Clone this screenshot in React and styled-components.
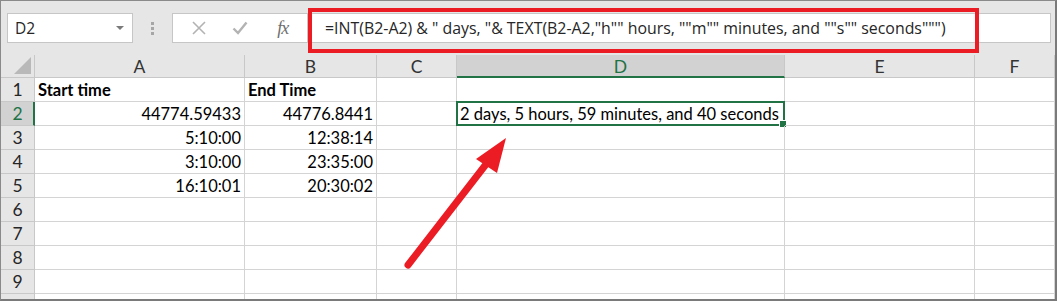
import React from "react";
import styled, { createGlobalStyle } from "styled-components";

const GlobalStyle = createGlobalStyle`
  html, body {
    margin: 0;
    padding: 0;
    background: #ffffff;
  }
  * {
    box-sizing: border-box;
  }
`;

const COLUMNS = [
  { key: "A", width: 210 },
  { key: "B", width: 132 },
  { key: "C", width: 80 },
  { key: "D", width: 328 },
  { key: "E", width: 190 },
  { key: "F", width: 80 },
];

const ROWS = [
  { A: { text: "Start time", bold: true }, B: { text: "End Time", bold: true } },
  {
    A: { text: "44774.59433", right: true },
    B: { text: "44776.8441", right: true },
    D: { text: "2 days, 5 hours, 59 minutes, and 40 seconds" },
  },
  { A: { text: "5:10:00", right: true }, B: { text: "12:38:14", right: true } },
  { A: { text: "3:10:00", right: true }, B: { text: "23:35:00", right: true } },
  { A: { text: "16:10:01", right: true }, B: { text: "20:30:02", right: true } },
  {},
  {},
  {},
  {},
];

const SELECTED = { col: "D", row: 2 };
const FORMULA =
  '=INT(B2-A2) & " days, "& TEXT(B2-A2,"h"" hours, ""m"" minutes, and ""s"" seconds""")';

const Frame = styled.div`
  position: relative;
  width: 1057px;
  height: 301px;
  overflow: hidden;
  border-top: 1px solid #8a8a8a;
  border-left: 1px solid #8a8a8a;
  border-right: 2px solid #7a7a7a;
  border-bottom: 2px solid #7a7a7a;
  background: #e6e6e6;
  display: flex;
  flex-direction: column;
`;

const Toolbar = styled.div`
  position: relative;
  height: 54px;
  flex-shrink: 0;
  display: flex;
  align-items: flex-start;
  padding: 12px 4px 0 6px;
`;

const NameBox = styled.div`
  width: 126px;
  height: 30px;
  background: #ffffff;
  border: 1px solid #c6c6c6;
  display: flex;
  align-items: center;
  justify-content: space-between;
  padding: 0 8px 0 7px;
  font-family: "Open Sans", "Noto Sans", sans-serif;
  font-size: 15.5px;
  color: #262626;
`;

const Caret = styled.span`
  width: 0;
  height: 0;
  border-left: 4px solid transparent;
  border-right: 4px solid transparent;
  border-top: 4px solid #7a7a7a;
`;

const Grip = styled.div`
  width: 39px;
  height: 30px;
  display: flex;
  flex-direction: column;
  align-items: center;
  justify-content: center;
  gap: 2px;
`;

const GripDot = styled.span`
  width: 3px;
  height: 3px;
  background: #a6a6a6;
`;

const ButtonBox = styled.div`
  width: 136px;
  height: 30px;
  background: #ffffff;
  border: 1px solid #c6c6c6;
  display: flex;
  align-items: center;
  justify-content: space-around;
  padding: 0 6px;
`;

const IconButton = styled.span`
  width: 34px;
  display: flex;
  align-items: center;
  justify-content: center;
  color: ${(p) => p.$color || "#b3b3b3"};
`;

const Fx = styled.span`
  font-family: "Liberation Serif", "DejaVu Serif", serif;
  font-style: italic;
  font-size: 18px;
  color: #6e6e6e;
  letter-spacing: -1px;
  margin-left: 4px;
`;

const FormulaInput = styled.div`
  flex: 1;
  height: 30px;
  margin-left: 1px;
  background: #ffffff;
  border: 1px solid #c6c6c6;
  border-left: none;
  display: flex;
  align-items: center;
  padding-left: 16px;
  font-family: "Open Sans", "Noto Sans", sans-serif;
  font-size: 15.9px;
  color: #262626;
  white-space: nowrap;
`;

const Highlight = styled.div`
  position: absolute;
  left: 307px;
  top: 7px;
  width: 671px;
  height: 45px;
  border: 4px solid #ec1c24;
  pointer-events: none;
`;

const Sheet = styled.div`
  display: grid;
  grid-template-columns: 34px ${COLUMNS.map((c) => `${c.width}px`).join(" ")};
  grid-auto-rows: 24px;
  grid-template-rows: 23px;
  background: #ffffff;
  font-family: Lato, "Liberation Sans", sans-serif;
`;

const Corner = styled.div`
  position: relative;
  background: #e6e6e6;
  border-right: 1px solid #c8c8c8;
  border-bottom: 1px solid #c8c8c8;

  &::after {
    content: "";
    position: absolute;
    right: 3px;
    bottom: 3px;
    width: 0;
    height: 0;
    border-left: 17px solid transparent;
    border-bottom: 17px solid #b9b9b9;
  }
`;

const ColHeader = styled.div`
  background: ${(p) => (p.$active ? "#d2d2d2" : "#e6e6e6")};
  color: ${(p) => (p.$active ? "#217346" : "#333333")};
  border-right: 1px solid #c8c8c8;
  border-bottom: ${(p) => (p.$active ? "2px solid #217346" : "1px solid #c8c8c8")};
  display: flex;
  align-items: center;
  justify-content: center;
  font-size: 17.5px;
  padding-top: ${(p) => (p.$active ? "1px" : "0")};
`;

const RowHeader = styled.div`
  background: ${(p) => (p.$active ? "#d2d2d2" : "#e6e6e6")};
  color: ${(p) => (p.$active ? "#217346" : "#262626")};
  border-right: ${(p) => (p.$active ? "2px solid #217346" : "1px solid #c8c8c8")};
  border-bottom: 1px solid #c8c8c8;
  display: flex;
  align-items: center;
  justify-content: center;
  font-size: 17.5px;
  padding-left: ${(p) => (p.$active ? "1px" : "0")};
`;

const Cell = styled.div`
  position: relative;
  border-right: 1px solid #d4d4d4;
  border-bottom: 1px solid #d4d4d4;
  display: flex;
  align-items: center;
  justify-content: ${(p) => (p.$right ? "flex-end" : "flex-start")};
  padding: 1px 3px 0 3px;
  font-size: 16.5px;
  font-weight: ${(p) => (p.$bold ? 700 : 400)};
  color: #000000;
  white-space: nowrap;
`;

const Selection = styled.div`
  position: absolute;
  left: -1px;
  top: -1px;
  right: -1px;
  bottom: -1px;
  border: 2px solid #217346;
  pointer-events: none;

  &::after {
    content: "";
    position: absolute;
    right: -4px;
    bottom: -4px;
    width: 6px;
    height: 6px;
    background: #217346;
    border: 1px solid #ffffff;
  }
`;

const Annotation = styled.svg`
  position: absolute;
  left: -1px;
  top: -1px;
  pointer-events: none;
`;

const CrossIcon = () => (
  <svg width="14" height="14" viewBox="0 0 14 14">
    <path d="M1 1 L13 13 M13 1 L1 13" stroke="currentColor" strokeWidth="1.6" fill="none" />
  </svg>
);

const CheckIcon = () => (
  <svg width="16" height="14" viewBox="0 0 16 14">
    <path d="M1.5 7.5 L6 12 L14.5 1.5" stroke="currentColor" strokeWidth="2.4" fill="none" />
  </svg>
);

const FormulaBar = () => (
  <Toolbar>
    <NameBox>
      D2
      <Caret />
    </NameBox>
    <Grip>
      <GripDot />
      <GripDot />
      <GripDot />
    </Grip>
    <ButtonBox>
      <IconButton>
        <CrossIcon />
      </IconButton>
      <IconButton>
        <CheckIcon />
      </IconButton>
      <IconButton>
        <Fx>fx</Fx>
      </IconButton>
    </ButtonBox>
    <FormulaInput>{FORMULA}</FormulaInput>
    <Highlight />
  </Toolbar>
);

const Grid = () => (
  <Sheet>
    <Corner />
    {COLUMNS.map((c) => (
      <ColHeader key={c.key} $active={c.key === SELECTED.col}>
        {c.key}
      </ColHeader>
    ))}
    {ROWS.map((row, i) => {
      const n = i + 1;
      return (
        <React.Fragment key={n}>
          <RowHeader $active={n === SELECTED.row}>{n}</RowHeader>
          {COLUMNS.map((c) => {
            const cell = row[c.key] || {};
            const selected = n === SELECTED.row && c.key === SELECTED.col;
            return (
              <Cell key={c.key} $right={cell.right} $bold={cell.bold}>
                {cell.text}
                {selected && <Selection />}
              </Cell>
            );
          })}
        </React.Fragment>
      );
    })}
    {/* row 10 is only a sliver at the bottom edge */}
    <RowHeader />
    {COLUMNS.map((c) => (
      <Cell key={c.key} />
    ))}
  </Sheet>
);

const App = () => {
  return (
    <>
      <GlobalStyle />
      <Frame>
        <FormulaBar />
        <Grid />
        <Annotation width="1057" height="301" viewBox="0 0 1057 301">
          <line
            x1="408"
            y1="265"
            x2="487"
            y2="163"
            stroke="#ec1c24"
            strokeWidth="7"
            strokeLinecap="round"
          />
          <polygon points="506,138 476,159 497,173" fill="#ec1c24" />
        </Annotation>
      </Frame>
    </>
  );
};

export default App;
